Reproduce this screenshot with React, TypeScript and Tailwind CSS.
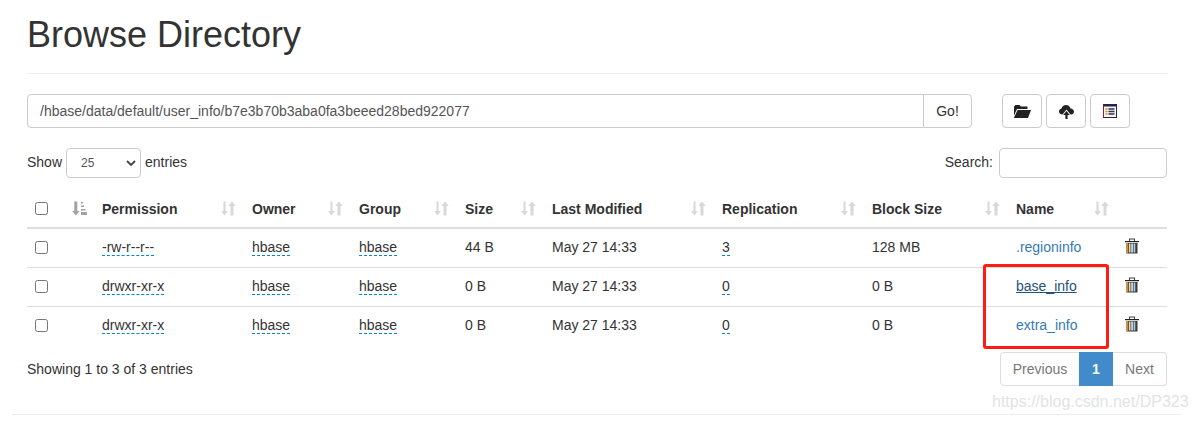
const columns = [
  { label: 'Permission', width: 'w-[150px]' },
  { label: 'Owner', width: 'w-[107px]' },
  { label: 'Group', width: 'w-[106px]' },
  { label: 'Size', width: 'w-[87px]' },
  { label: 'Last Modified', width: 'w-[170px]' },
  { label: 'Replication', width: 'w-[150px]' },
  { label: 'Block Size', width: 'w-[144px]' },
  { label: 'Name', width: 'w-[109px]' },
]

const rows = [
  { permission: '-rw-r--r--', size: '44 B', replication: '3', block: '128 MB', name: '.regioninfo', hover: false },
  { permission: 'drwxr-xr-x', size: '0 B', replication: '0', block: '0 B', name: 'base_info', hover: true },
  { permission: 'drwxr-xr-x', size: '0 B', replication: '0', block: '0 B', name: 'extra_info', hover: false },
]

function SortIcon() {
  return (
    <svg width="15" height="15" viewBox="0 0 15 15" fill="currentColor" className="text-[#d8d8d8]">
      <path d="M2.500 0.500h2v9.500h2.300l-3.300 4.500L0.200 10h2.300z" />
      <path d="M9.500 14.500h3V5h2.300L11 0.500 7.200 5h2.300z" />
    </svg>
  )
}

function SortActiveIcon() {
  return (
    <svg width="15" height="15" viewBox="0 0 15 15" fill="currentColor" className="text-[#a3a3a3]">
      <path d="M2.300 0.500h3V10h2.200l-3.700 4.500L0.100 10h2.200z" />
      <path d="M9 1h2v1.500H9zM9 4.500h3V6H9zM9 8h4.500v1.500H9zM9 11h6v3H9z" />
    </svg>
  )
}

function FolderIcon() {
  return (
    <svg width="18" height="14" viewBox="0 0 18 14" fill="#222">
      <path d="M1 2.500L2.500 1h4L8 2.500h6.500V5H4L1 11.500z" />
      <path d="M4.600 6H18l-3 8H0.800z" />
    </svg>
  )
}

function TrashIcon() {
  return (
    <svg width="14" height="16" viewBox="0 0 14 16" fill="none">
      <path d="M0 3h14v1.200H0z" fill="#222" />
      <path d="M4.500 3V1h5v2" stroke="#444" strokeWidth="1.100" />
      <path d="M1.500 5h11v10.500h-11z" fill="#3a3a3a" />
      <path d="M1.500 5h1.500v10.500H1.500z" fill="#d08c38" />
      <path d="M3.800 5.500h1.700v9H3.800z" fill="#ecd9a0" />
      <path d="M6.300 5.500h1.500v9H6.300z" fill="#f4f4f4" />
      <path d="M8.600 5.500h1.700v9H8.600z" fill="#a4ccf4" />
    </svg>
  )
}

function UploadIcon() {
  return (
    <svg width="15" height="15" viewBox="0 0 15 15" fill="#222">
      <path d="M3.500 10.500C1.500 10.500 0 9.200 0 7.400c0-1.500 1-2.700 2.500-3C3 2.400 4.800 1 7 1c2.300 0 4.100 1.500 4.500 3.400 1.900.1 3.500 1.400 3.500 3.100 0 1.700-1.300 3-3 3h-.500L7.500 5.500 3.500 10.500z" />
      <path d="M7.500 7l3.300 4H8.600v4H6.400v-4H4.200z" />
    </svg>
  )
}

function ListIcon() {
  return (
    <svg width="14" height="14" viewBox="0 0 14 14" fill="none">
      <rect x="0.500" y="0.500" width="13" height="13" fill="#fdf6e8" stroke="#24244e" />
      <path d="M0.500 0.500h13v2h-13z" fill="#24244e" />
      <path d="M0.500 1v12.500" stroke="#8a2030" strokeWidth="1" />
      <path d="M2.500 5h2M2.500 7.500h2M2.500 10h2" stroke="#c9803c" strokeWidth="1.300" />
      <path d="M5.500 5h6M5.500 7.500h6M5.500 10h6" stroke="#24345c" strokeWidth="1.300" />
    </svg>
  )
}

function Check() {
  return <span className="block w-[13px] h-[13px] rounded-[2.5px] border border-[#767676] bg-white" />
}

function Dashed({ children }: { children: React.ReactNode }) {
  return <span className="border-b border-dashed border-[#0088cc]">{children}</span>
}

export default function App() {
  return (
    <div className="relative h-[421px] overflow-hidden bg-white text-sm leading-5 text-[#333] font-['Liberation_Sans',Arial,sans-serif]">
      <div className="ml-3 w-[1170px] px-[15px]">
        {/* Page header */}
        <div className="border-b border-[#eee] h-[74px] pt-[12px]">
          <h1 className="text-[36px] leading-[46px] font-normal">Browse Directory</h1>
        </div>

        {/* Path bar and tools */}
        <div className="flex mt-5 h-[34px]">
          <div className="flex w-[945px]">
            <div className="flex-1 flex items-center px-3 border border-[#ccc] rounded-l text-[#555]">
              /hbase/data/default/user_info/b7e3b70b3aba0fa3beeed28bed922077
            </div>
            <button className="w-[49px] -ml-px border border-[#ccc] rounded-r">Go!</button>
          </div>
          <div className="flex gap-1 ml-[30px]">
            <button className="w-10 flex items-center justify-center border border-[#ccc] rounded">
              <FolderIcon />
            </button>
            <button className="w-10 flex items-center justify-center border border-[#ccc] rounded">
              <UploadIcon />
            </button>
            <button className="w-10 flex items-center justify-center border border-[#ccc] rounded">
              <ListIcon />
            </button>
          </div>
        </div>

        {/* Table controls */}
        <div className="flex justify-between items-center mt-5 h-[30px]">
          <div className="flex items-center">
            <span className="mb-[2px]">Show</span>
            <div className="relative ml-1 mr-1 w-[75px] h-[30px] flex items-center pl-[14px] border border-[#ccc] rounded text-xs text-[#555]">
              25
              <svg width="10" height="7" viewBox="0 0 10 7" className="absolute right-[4px] top-[11px]" fill="none">
                <path d="M1 1l4 4 4-4" stroke="#444" strokeWidth="1.800" />
              </svg>
            </div>
            <span className="mb-[2px]">entries</span>
          </div>
          <div className="flex items-center">
            <span className="mb-[2px] text-[#333]">Search:</span>
            <div className="ml-[6px] w-[168px] h-[30px] border border-[#ccc] rounded" />
          </div>
        </div>

        {/* File table */}
        <table className="mt-[11px] w-[1140px] table-fixed border-collapse">
          <thead>
            <tr className="h-[39px] border-b-2 border-[#ddd]">
              <th className="w-[37px] pl-2 align-middle">
                <Check />
              </th>
              <th className="w-[30px] pl-2 align-middle">
                <SortActiveIcon />
              </th>
              {columns.map((col) => (
                <th key={col.label} className={`${col.width} px-2 text-left font-bold`}>
                  <div className="flex items-center justify-between">
                    <span className="pt-[2px]">{col.label}</span>
                    <SortIcon />
                  </div>
                </th>
              ))}
              <th className="w-[50px]" />
            </tr>
          </thead>
          <tbody>
            {rows.map((row, i) => (
              <tr key={row.name} className={`h-[39px] ${i < 2 ? 'border-b border-[#ddd]' : ''}`}>
                <td className="pl-2">
                  <Check />
                </td>
                <td />
                <td className="px-2 pb-[2px]"><Dashed>{row.permission}</Dashed></td>
                <td className="px-2 pb-[2px]"><Dashed>hbase</Dashed></td>
                <td className="px-2 pb-[2px]"><Dashed>hbase</Dashed></td>
                <td className="px-2 pb-[2px]">{row.size}</td>
                <td className="px-2 pb-[2px]">May 27 14:33</td>
                <td className="px-2 pb-[2px]"><Dashed>{row.replication}</Dashed></td>
                <td className="px-2 pb-[2px]">{row.block}</td>
                <td className="px-2 pb-[2px]">
                  <span className={row.hover ? 'text-[#23527c] underline' : 'text-[#337ab7]'}>{row.name}</span>
                </td>
                <td className="pl-2 align-top pt-[9px]">
                  <TrashIcon />
                </td>
              </tr>
            ))}
          </tbody>
        </table>

        {/* Table footer */}
        <div className="flex justify-between items-start mt-[7px]">
          <span className="mt-[7px]">Showing 1 to 3 of 3 entries</span>
          <div className="flex h-[34px]">
            <span className="w-[80px] flex items-center justify-center border border-[#ddd] rounded-l text-[#777]">Previous</span>
            <span className="w-[34px] -ml-px flex items-center justify-center bg-[#428bca] text-white font-bold">1</span>
            <span className="w-[54px] flex items-center justify-center border border-[#ddd] border-l-0 rounded-r text-[#777]">Next</span>
          </div>
        </div>
      </div>

      <div className="ml-3 w-[1170px] mt-[28px] border-t border-[#eee]" />

      {/* Watermark and annotation drawn over the page */}
      <span className="absolute left-[992px] top-[392px] text-[16px] leading-5 text-[#e3e3e3]">https://blog.csdn.net/DP323</span>
      <div className="absolute left-[983px] top-[264px] w-[126px] h-[85px] border-[3px] border-[#ff1a12] rounded-[3px]" />
    </div>
  )
}
